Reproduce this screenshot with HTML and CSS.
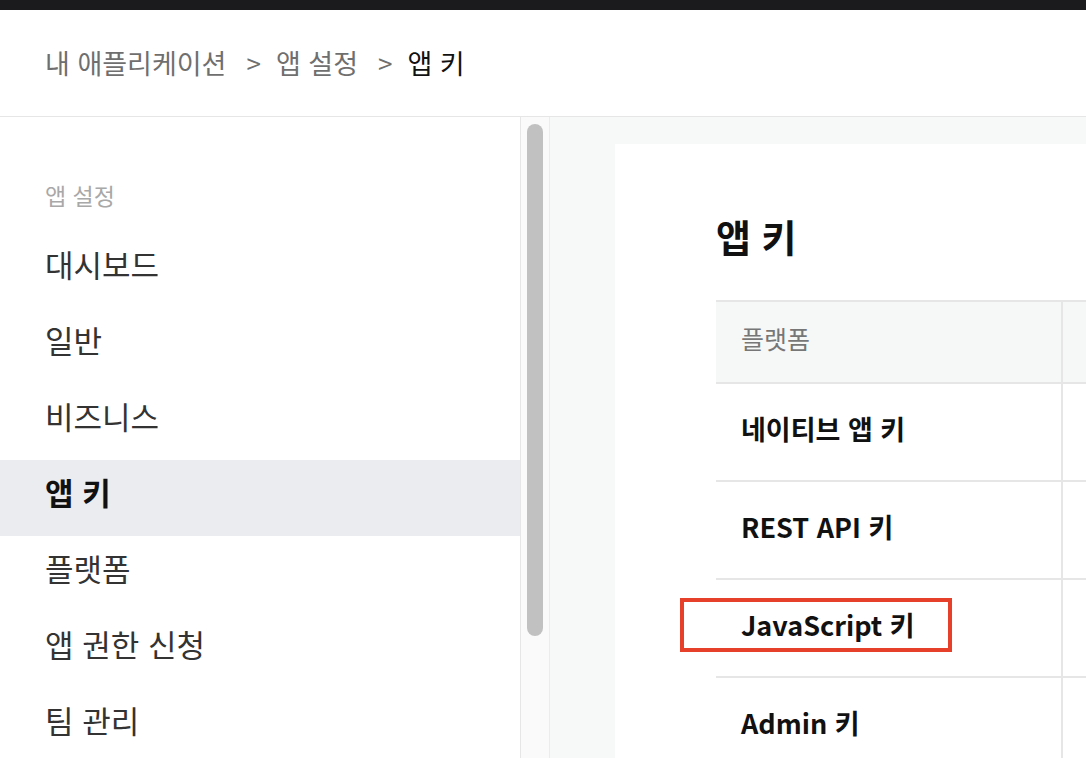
FILE: index.html
```html
<!DOCTYPE html>
<html lang="ko">
<head>
<meta charset="utf-8">
<title>앱 키</title>
<link rel="stylesheet" href="styles.css">
</head>
<body>
<div class="topbar"></div>
<header class="header">
  <nav class="crumbs">
    <span class="crumb">내 애플리케이션</span>
    <span class="sep">&gt;</span>
    <span class="crumb">앱 설정</span>
    <span class="sep">&gt;</span>
    <span class="crumb current">앱 키</span>
  </nav>
</header>
<div class="layout">
  <aside class="sidebar">
    <div class="side-label">앱 설정</div>
    <ul class="menu">
      <li class="menu-item">대시보드</li>
      <li class="menu-item">일반</li>
      <li class="menu-item">비즈니스</li>
      <li class="menu-item active">앱 키</li>
      <li class="menu-item">플랫폼</li>
      <li class="menu-item">앱 권한 신청</li>
      <li class="menu-item">팀 관리</li>
    </ul>
  </aside>
  <div class="scrolltrack"><div class="thumb"></div></div>
  <main class="main">
    <section class="card">
      <h1 class="title">앱 키</h1>
      <div class="table">
        <div class="row head">
          <div class="cell first">플랫폼</div>
          <div class="cell rest"></div>
        </div>
        <div class="row">
          <div class="cell first">네이티브 앱 키</div>
          <div class="cell rest"></div>
        </div>
        <div class="row">
          <div class="cell first">REST API 키</div>
          <div class="cell rest"></div>
        </div>
        <div class="row">
          <div class="cell first marked">JavaScript 키<span class="mark"></span></div>
          <div class="cell rest"></div>
        </div>
        <div class="row">
          <div class="cell first">Admin 키</div>
          <div class="cell rest"></div>
        </div>
      </div>
    </section>
  </main>
</div>
</body>
</html>
```

FILE: styles.css
```css
* { box-sizing: border-box; }
html, body {
  margin: 0;
  padding: 0;
  height: 758px;
  overflow: hidden;
  background: #ffffff;
  font-family: "Noto Sans CJK KR", "Noto Sans", sans-serif;
}
.topbar {
  height: 10px;
  background: #1b1b1d;
}
.header {
  height: 107px;
  border-bottom: 1px solid #e6e6e6;
  display: flex;
  align-items: center;
  padding-left: 45px;
}
.crumbs {
  display: flex;
  align-items: center;
  font-size: 27px;
  color: #6f6f6f;
  margin-top: -2px;
}
.sep {
  margin: 0 15px 0 20px;
  font-size: 26px;
}
.crumb.current { color: #111111; }
.layout {
  display: flex;
  height: 641px;
}
.sidebar {
  width: 521px;
  flex: none;
  border-right: 1px solid #e6e6e6;
  padding-top: 58px;
}
.side-label {
  padding-left: 45px;
  font-size: 23px;
  color: #a8a8a8;
  height: 40px;
  line-height: 40px;
}
.menu {
  list-style: none;
  margin: 17px 0 0 0;
  padding: 0;
}
.menu-item {
  height: 76px;
  line-height: 64px;
  padding-left: 45px;
  font-size: 31px;
  color: #333333;
}
.menu-item.active {
  background: #ebecf0;
  font-weight: 700;
  color: #111111;
}
.scrolltrack {
  width: 29px;
  flex: none;
  background: #fafafa;
  border-right: 1px solid #ececec;
  padding: 7px 0 0 6px;
}
.thumb {
  width: 16px;
  height: 512px;
  border-radius: 8px;
  background: #c1c1c1;
}
.main {
  flex: 1;
  background: #f7f8f8;
  padding: 27px 0 0 65px;
  overflow: hidden;
}
.card {
  background: #ffffff;
  height: 100%;
  padding: 66px 0 0 101px;
}
.title {
  margin: 0;
  font-size: 38px;
  font-weight: 700;
  color: #111111;
  line-height: 52px;
}
.table {
  margin-top: 38px;
  border-top: 2px solid #e6e6e6;
}
.row {
  display: flex;
  height: 98px;
  border-bottom: 2px solid #e6e6e6;
}
.row.head {
  height: 82px;
  background: #f6f7f7;
}
.cell {
  display: flex;
  align-items: center;
  padding-left: 25px;
  padding-bottom: 8px;
}
.cell.first {
  flex: none;
  width: 347px;
  border-right: 2px solid #e6e6e6;
  font-size: 27px;
  font-weight: 700;
  color: #111111;
}
.row.head .cell.first {
  font-size: 25px;
  font-weight: 400;
  color: #777777;
}
.cell.rest { flex: 1; }
.marked { position: relative; }
.mark {
  position: absolute;
  left: -36px;
  top: 18px;
  width: 272px;
  height: 54px;
  border: 4px solid #e6402a;
}
```
